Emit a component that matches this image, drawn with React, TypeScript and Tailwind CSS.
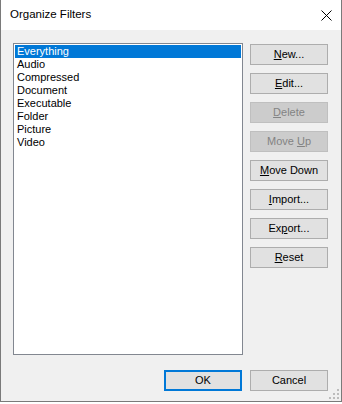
import React from "react"

const items = ["Everything", "Audio", "Compressed", "Document", "Executable", "Folder", "Picture", "Video"]

type Btn = { pre: string; key: string; post: string; disabled?: boolean }

const buttons: Btn[] = [
  { pre: "", key: "N", post: "ew..." },
  { pre: "", key: "E", post: "dit..." },
  { pre: "", key: "D", post: "elete", disabled: true },
  { pre: "Move ", key: "U", post: "p", disabled: true },
  { pre: "", key: "M", post: "ove Down" },
  { pre: "", key: "I", post: "mport..." },
  { pre: "Ex", key: "p", post: "ort..." },
  { pre: "", key: "R", post: "eset" },
]

function DialogButton({ b }: { b: Btn }) {
  return (
    <div
      className={
        b.disabled
          ? "w-[78px] h-[21px] flex items-center justify-center border border-[#bfbfbf] bg-[#cccccc] text-[#838383]"
          : "w-[78px] h-[21px] flex items-center justify-center border border-[#adadad] bg-[#e1e1e1] text-black"
      }
    >
      <span>
        {b.pre}
        <span className="underline underline-offset-[1px]">{b.key}</span>
        {b.post}
      </span>
    </div>
  )
}

export default function App() {
  return (
    <div className="w-[342px] h-[404px] bg-white" style={{ fontFamily: '"Liberation Sans", Arial, sans-serif' }}>
      <div className="relative w-[342px] h-[402px] flex flex-col border-x border-b border-[#7a7a7a]">
        {/* title bar */}
        <div className="h-[30px] bg-white flex items-center justify-between pl-[9px]">
          <span className="text-[11.5px] text-black">Organize Filters</span>
          <svg width="11" height="11" viewBox="0 0 11 11" className="mr-[9px]">
            <path d="M0.5 0.5 L10.5 10.5 M10.5 0.5 L0.5 10.5" stroke="#000" strokeWidth="1" />
          </svg>
        </div>

        {/* client area */}
        <div className="flex-1 bg-[#f0f0f0] pt-[13px] pl-[12px] pr-[13px] text-[11px] leading-[13px]">
          <div className="flex">
            <div className="w-[230px] h-[312px] border border-[#828790] bg-white p-[1px]">
              {items.map((it, i) => (
                <div
                  key={it}
                  className={
                    i === 0
                      ? "h-[13px] pl-[2px] bg-[#0078d7] text-white"
                      : "h-[13px] pl-[2px] text-black"
                  }
                >
                  {it}
                </div>
              ))}
            </div>
            <div className="ml-[7px] mt-[1px] flex flex-col gap-[8px]">
              {buttons.map((b) => (
                <DialogButton key={b.pre + b.key + b.post} b={b} />
              ))}
            </div>
          </div>

          <div className="mt-[15px] flex justify-end gap-[8px]">
            <div className="w-[78px] h-[21px] flex items-center justify-center border-2 border-[#0078d7] bg-[#e1e1e1] text-black">
              OK
            </div>
            <div className="w-[78px] h-[21px] flex items-center justify-center border border-[#adadad] bg-[#e1e1e1] text-black">
              Cancel
            </div>
          </div>
        </div>

        {/* resize grip */}
        <svg width="11" height="11" viewBox="0 0 11 11" className="absolute right-[1px] bottom-[1px]">
          <rect x="8" y="0" width="2" height="2" fill="#bcbcbc" />
          <rect x="4" y="4" width="2" height="2" fill="#bcbcbc" />
          <rect x="8" y="4" width="2" height="2" fill="#bcbcbc" />
          <rect x="0" y="8" width="2" height="2" fill="#bcbcbc" />
          <rect x="4" y="8" width="2" height="2" fill="#bcbcbc" />
          <rect x="8" y="8" width="2" height="2" fill="#bcbcbc" />
        </svg>
      </div>
    </div>
  )
}
